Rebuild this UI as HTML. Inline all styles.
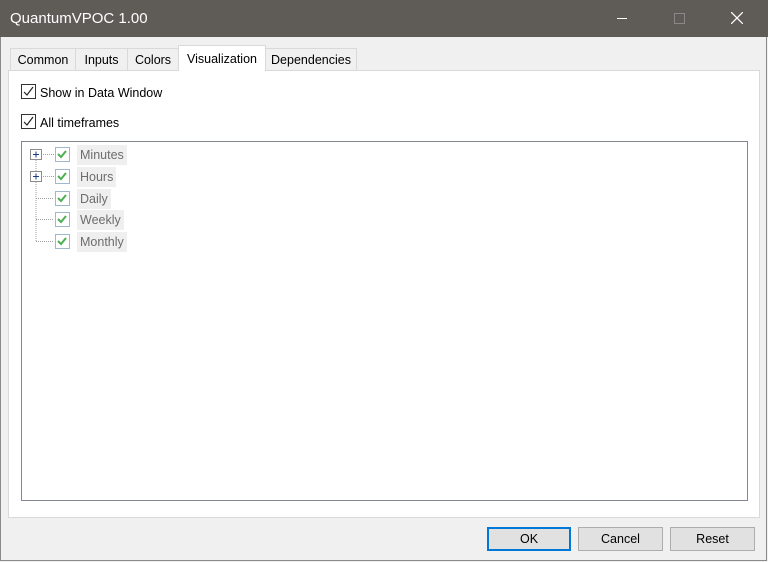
<!DOCTYPE html>
<html><head><style>
body{margin:0;width:768px;height:562px;background:#f0f0f0;font-family:"Liberation Sans",sans-serif;font-size:12.5px;color:#000;position:relative;overflow:hidden}
.a{position:absolute}
#title{left:0;top:0;width:768px;height:37px;background:#5f5b57;color:#fff;font-size:15px}
.tab{position:absolute;top:48px;height:22px;border:1px solid #d9d9d9;border-bottom:none;background:#f0f0f0;box-sizing:border-box;text-align:center;line-height:23px}
.cb{position:absolute;width:13px;height:13px;border:1px solid #333;background:#fff}
.tcb{position:absolute;left:55px;width:15px;height:15px;border:1px solid #9fb8cf;background:#fff;box-sizing:border-box}
.lbl{position:absolute;left:77px;height:20px;line-height:21px;background:#efefef;color:#6d6d6d;padding:0 3px}
.btn{position:absolute;top:527px;height:24px;border:1px solid #adadad;background:#e1e1e1;box-sizing:border-box;text-align:center;line-height:23px}
</style></head><body>
<div class="a" id="title"><span class="a" style="left:10px;top:10px">QuantumVPOC 1.00</span>
<div class="a" style="left:617px;top:18px;width:10px;height:1px;background:#fff"></div>
<div class="a" style="left:674px;top:13px;width:9px;height:9px;border:1px solid #888"></div>
<svg class="a" style="left:731px;top:12px" width="12" height="12"><path d="M0 0L12 12M12 0L0 12" stroke="#fff" stroke-width="1.3"/></svg>
</div>
<div class="a" style="left:0;top:37px;width:767px;height:524px;border:1px solid #8a8a8a;border-top:none;box-sizing:border-box"></div>
<div class="a" style="left:8px;top:70px;width:752px;height:448px;background:#fff;border:1px solid #d9d9d9;box-sizing:border-box"></div>
<div class="tab" style="left:10px;width:66px">Common</div>
<div class="tab" style="left:75px;width:53px">Inputs</div>
<div class="tab" style="left:127px;width:52px">Colors</div>
<div class="tab" style="left:178px;top:45px;height:26px;width:88px;background:#fff;line-height:26px">Visualization</div>
<div class="tab" style="left:265px;width:92px">Dependencies</div>
<div class="cb" style="left:21px;top:84px"></div><svg class="a" style="left:23px;top:86px" width="11" height="11"><path d="M1 6L4 9L10 1" stroke="#222" fill="none" stroke-width="1.2"/></svg>
<span class="a" style="left:40px;top:86px">Show in Data Window</span>
<div class="cb" style="left:21px;top:114px"></div><svg class="a" style="left:23px;top:116px" width="11" height="11"><path d="M1 6L4 9L10 1" stroke="#222" fill="none" stroke-width="1.2"/></svg>
<span class="a" style="left:40px;top:116px">All timeframes</span>
<div class="a" style="left:21px;top:141px;width:727px;height:360px;border:1px solid #828790;box-sizing:border-box"></div>
<svg class="a" style="left:30px;top:145px" width="30" height="105">
<g stroke="#a0a0a0" stroke-dasharray="1 1" fill="none">
<path d="M6 15V97M11 9.5H24M11 31.5H24M6 53.5H24M6 74.5H24M6 96.5H24"/></g>
<g fill="#fff" stroke="#8c8c8c"><rect x="0.5" y="4.5" width="11" height="10"/><rect x="0.5" y="26.5" width="11" height="10"/></g>
<path d="M3 9.5H9M6 6.5V12.5M3 31.5H9M6 28.5V34.5" stroke="#1a3a8a"/>
</svg>
<div class="tcb" style="top:147px"></div><div class="lbl" style="top:145px">Minutes</div>
<div class="tcb" style="top:169px"></div><div class="lbl" style="top:167px">Hours</div>
<div class="tcb" style="top:191px"></div><div class="lbl" style="top:189px">Daily</div>
<div class="tcb" style="top:212px"></div><div class="lbl" style="top:210px">Weekly</div>
<div class="tcb" style="top:234px"></div><div class="lbl" style="top:232px">Monthly</div>
<svg class="a" style="left:57px;top:149px" width="10" height="100"><g stroke="#4cb050" stroke-width="2" fill="none"><path d="M1 5L4 8L9 2"/><path d="M1 27L4 30L9 24"/><path d="M1 49L4 52L9 46"/><path d="M1 70L4 73L9 67"/><path d="M1 92L4 95L9 89"/></g></svg>
<div class="btn" style="left:487px;width:84px;border:2px solid #0078d7;line-height:21px">OK</div>
<div class="btn" style="left:578px;width:85px">Cancel</div>
<div class="btn" style="left:670px;width:85px">Reset</div>
</body></html>
